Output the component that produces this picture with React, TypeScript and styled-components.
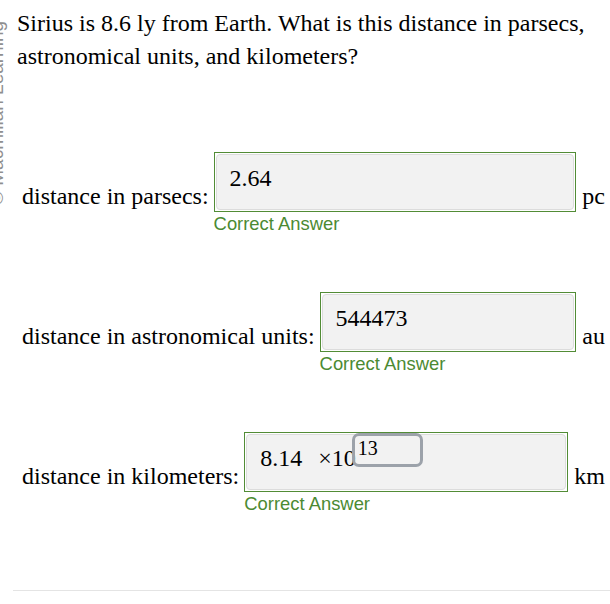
import React from "react"
import styled, { createGlobalStyle } from "styled-components"

const GlobalStyle = createGlobalStyle`
  body {
    margin: 0;
    background: #ffffff;
    font-family: "Liberation Serif", "Times New Roman", serif;
    color: #000000;
  }
`

interface Answer {
  label: string
  value: string
  exponent?: string
  unit: string
}

const answers: Answer[] = [
  { label: "distance in parsecs:", value: "2.64", unit: "pc" },
  { label: "distance in astronomical units:", value: "544473", unit: "au" },
  { label: "distance in kilometers:", value: "8.14", exponent: "13", unit: "km" },
]

const App: React.FC = () => {
  return (
    <StyledPage>
      <GlobalStyle />
      <StyledWatermark>© Macmillan Learning</StyledWatermark>
      <StyledQuestion>
        Sirius is 8.6 ly from Earth. What is this distance in parsecs,
        astronomical units, and kilometers?
      </StyledQuestion>
      {answers.map((answer) => (
        <StyledRow key={answer.unit}>
          <StyledLabel>{answer.label}</StyledLabel>
          <StyledField>
            <StyledBox>
              <StyledInner>
                <StyledValue>{answer.value}</StyledValue>
                {answer.exponent && (
                  <>
                    <StyledTimes>×10</StyledTimes>
                    <StyledExponent>{answer.exponent}</StyledExponent>
                  </>
                )}
              </StyledInner>
            </StyledBox>
            <StyledCorrect>Correct Answer</StyledCorrect>
          </StyledField>
          <StyledUnit>{answer.unit}</StyledUnit>
        </StyledRow>
      ))}
      <StyledDivider />
    </StyledPage>
  )
}

const StyledPage = styled.div`
  position: relative;
  width: 610px;
  height: 604px;
  padding-top: 7px;
  box-sizing: border-box;
  overflow: hidden;
`

const StyledWatermark = styled.span`
  position: absolute;
  left: -14px;
  top: 205px;
  transform-origin: top left;
  transform: rotate(-90deg);
  white-space: nowrap;
  font-family: "Liberation Sans", Arial, sans-serif;
  font-size: 19px;
  line-height: 22px;
  color: #8f8f8f;
`

const StyledQuestion = styled.p`
  margin: 0;
  padding: 0 10px 0 17px;
  font-size: 24px;
  line-height: 33px;
`

const StyledRow = styled.div`
  display: flex;
  align-items: flex-start;
  gap: 5px;
  margin-top: 58px;
  padding: 0 5px 0 22px;

  &:first-of-type {
    margin-top: 79px;
  }
`

const StyledLabel = styled.div`
  margin-top: 28px;
  font-size: 24px;
  line-height: 33px;
  white-space: nowrap;
`

const StyledField = styled.div`
  flex: 1;
  display: flex;
  flex-direction: column;
`

const StyledBox = styled.div`
  height: 60px;
  box-sizing: border-box;
  border: 1px solid #528c36;
  padding: 1px;
  background: #ffffff;
`

const StyledInner = styled.div`
  height: 100%;
  box-sizing: border-box;
  display: flex;
  align-items: flex-start;
  padding-left: 13px;
  border: 1px solid #dcdcdc;
  border-radius: 4px;
  background: #f2f2f2;
`

const StyledValue = styled.span`
  margin-top: 7px;
  font-size: 24px;
  line-height: 33px;
`

const StyledTimes = styled.span`
  margin-top: 7px;
  margin-left: 16px;
  font-size: 24px;
  line-height: 33px;
`

const StyledExponent = styled.span`
  width: 62px;
  height: 28px;
  margin-top: -2px;
  margin-left: -4px;
  padding-left: 3px;
  box-sizing: content-box;
  border: 3px solid #9ca2aa;
  border-radius: 7px;
  font-size: 20px;
  line-height: 24px;
`

const StyledCorrect = styled.div`
  margin-top: 1px;
  font-family: "Liberation Sans", Arial, sans-serif;
  font-size: 18.4px;
  line-height: 21px;
  color: #4b8a32;
`

const StyledUnit = styled.div`
  margin-top: 28px;
  margin-left: 1px;
  font-size: 24px;
  line-height: 33px;
`

const StyledDivider = styled.div`
  margin: 76px 0 0 13px;
  height: 1px;
  background: #e4e4e4;
`

export default App
